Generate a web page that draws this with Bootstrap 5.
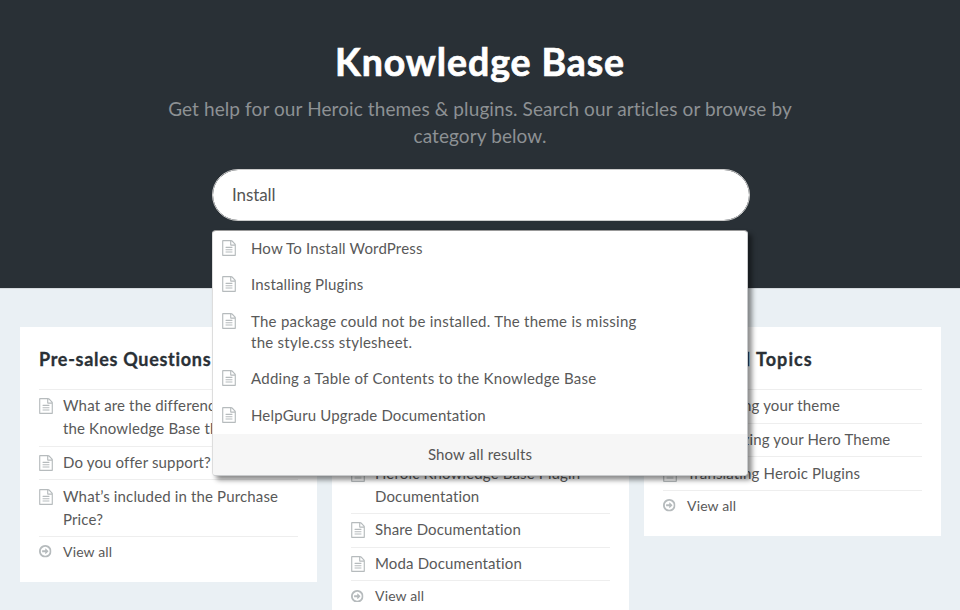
<!DOCTYPE html>
<html lang="en">
<head>
<meta charset="utf-8">
<meta name="viewport" content="width=device-width, initial-scale=1">
<title>Knowledge Base</title>
<link href="https://cdn.jsdelivr.net/npm/bootstrap@5.3.0/dist/css/bootstrap.min.css" rel="stylesheet">
<style>
body{background:#eaf0f4;font-family:Lato,"Open Sans",sans-serif;font-size:15px;color:#595959;letter-spacing:.15px;height:610px;overflow:hidden}
.hero{background:#293036;height:289px;border-bottom:1px solid #d5dade;padding-top:36px}
.hero h1{font-size:37.5px;line-height:52px;font-weight:700;color:#fff;letter-spacing:.9px;-webkit-text-stroke:.7px #fff}
.tagline{font-size:19px;line-height:27px;width:640px;margin-top:7px;color:#8d9194;letter-spacing:.1px}
.search{width:538px;margin:20px 0 0 2px}
.search .form-control{height:52px;padding:0 19px 1px;font-size:17px;color:#555;border:1px solid #ccc;letter-spacing:-.1px}
.results{top:61px;left:0;width:536px;background:#fff;border:1px solid #c8cacc;border-top-color:#999;border-left-color:#ddd;border-radius:4px;box-shadow:4px 4px 5px rgba(0,0,0,.45);padding:0;z-index:5}
.results li{padding:7.75px 90px 7.75px 9px;line-height:21px}
.results li:first-child{padding-top:6.75px}
.results .wide{letter-spacing:.26px}
.results .doc{margin-top:2px}
.results li>.doc{margin-right:15px}
.show-all{height:41px;background:#f6f6f6;border-radius:0 0 3px 3px;color:#555}
.topics{padding:38px 19px 0 20px;gap:15px}
.topic{width:297px;background:#fff;padding:0 19px}
.topic h2{height:63px;margin:0;padding-top:20px;font-size:18px;line-height:24px;font-weight:700;color:#2a3036;letter-spacing:.7px;-webkit-text-stroke:.3px #2a3036;border-bottom:1px solid #eee;white-space:nowrap}
.topic h2.spaced{letter-spacing:1.08px}
.topic li{padding:4.2px 0 5.5px;line-height:23px;border-bottom:1px solid #eee}
.topic li>.doc{margin:4px 10.5px 0 -.5px}
.more{font-size:14px;line-height:23px;padding:3px 0 19px}
.more svg{width:12.5px;height:12.5px;margin-right:11.5px}
.doc{width:14px;height:16px}
svg{fill:#b6bbbd;flex:none}
</style>
</head>
<body>
<svg class="d-none" aria-hidden="true">
<symbol id="doc" viewBox="128 0 1536 1792"><path d="M1596 380q28 28 48 76t20 88v1152q0 40-28 68t-68 28h-1344q-40 0-68-28t-28-68v-1600q0-40 28-68t68-28h896q40 0 88 20t76 48zm-444-244v376h376q-10-29-22-41l-313-313q-12-12-41-22zm384 1528v-1024h-416q-40 0-68-28t-28-68v-416h-768v1536h1280zm-1024-864q0-14 9-23t23-9h704q14 0 23 9t9 23v64q0 14-9 23t-23 9h-704q-14 0-23-9t-9-23v-64zm736 224q14 0 23 9t9 23v64q0 14-9 23t-23 9h-704q-14 0-23-9t-9-23v-64q0-14 9-23t23-9h704zm0 256q14 0 23 9t9 23v64q0 14-9 23t-23 9h-704q-14 0-23-9t-9-23v-64q0-14 9-23t23-9h704z"/></symbol>
<symbol id="arrow" viewBox="128 128 1536 1536"><path d="M1280 896q0 14-9 23l-320 320q-9 9-23 9-13 0-22.500-9.500t-9.500-22.500v-192h-352q-13 0-22.500-9.500t-9.500-22.500v-192q0-13 9.500-22.500t22.500-9.500h352v-192q0-14 9-23t23-9q12 0 24 10l319 319q9 9 9 23zm160 0q0-148-73-273t-198-198-273-73-273 73-198 198-73 273 73 273 198 198 273 73 273-73 198-198 73-273zm224 0q0 209-103 385.500t-279.500 279.500-385.500 103-385.500-103-279.500-279.500-103-385.500 103-385.500 279.500-279.500 385.500-103 385.500 103 279.500 279.500 103 385.500z"/></symbol>
</svg>
<header class="hero d-flex flex-column align-items-center text-center">
<h1 class="m-0">Knowledge Base</h1>
<p class="tagline mb-0">Get help for our Heroic themes &amp; plugins. Search our articles or browse by category below.</p>
<div class="search position-relative text-start">
<input class="form-control rounded-pill shadow-none" type="text" value="Install" aria-label="Search">
<div class="results position-absolute">
<ul class="list-unstyled m-0">
<li class="d-flex"><svg class="doc"><use href="#doc"/></svg><span>How To Install WordPress</span></li>
<li class="d-flex"><svg class="doc"><use href="#doc"/></svg><span>Installing Plugins</span></li>
<li class="d-flex wide"><svg class="doc"><use href="#doc"/></svg><span>The package could not be installed. The theme is missing the style.css stylesheet.</span></li>
<li class="d-flex wide"><svg class="doc"><use href="#doc"/></svg><span>Adding a Table of Contents to the Knowledge Base</span></li>
<li class="d-flex"><svg class="doc"><use href="#doc"/></svg><span>HelpGuru Upgrade Documentation</span></li>
</ul>
<div class="show-all d-flex align-items-center justify-content-center">Show all results</div>
</div>
</div>
</header>
<main class="topics d-flex align-items-start">
<section class="topic">
<h2>Pre-sales Questions</h2>
<ul class="list-unstyled m-0">
<li class="d-flex"><svg class="doc"><use href="#doc"/></svg><span>What are the differences between the Knowledge Base themes?</span></li>
<li class="d-flex"><svg class="doc"><use href="#doc"/></svg><span>Do you offer support?</span></li>
<li class="d-flex"><svg class="doc"><use href="#doc"/></svg><span>What’s included in the Purchase Price?</span></li>
</ul>
<div class="more d-flex align-items-center"><svg><use href="#arrow"/></svg>View all</div>
</section>
<section class="topic">
<h2>Documentation</h2>
<ul class="list-unstyled m-0">
<li class="d-flex"><svg class="doc"><use href="#doc"/></svg><span>HelpGuru Documentation</span></li>
<li class="d-flex"><svg class="doc"><use href="#doc"/></svg><span>KnowHow Documentation</span></li>
<li class="d-flex"><svg class="doc"><use href="#doc"/></svg><span>Heroic Knowledge Base Plugin Documentation</span></li>
<li class="d-flex"><svg class="doc"><use href="#doc"/></svg><span>Share Documentation</span></li>
<li class="d-flex"><svg class="doc"><use href="#doc"/></svg><span>Moda Documentation</span></li>
</ul>
<div class="more d-flex align-items-center"><svg><use href="#arrow"/></svg>View all</div>
</section>
<section class="topic">
<h2 class="spaced">Advanced Topics</h2>
<ul class="list-unstyled m-0">
<li class="d-flex"><svg class="doc"><use href="#doc"/></svg><span>Translating your theme</span></li>
<li class="d-flex"><svg class="doc"><use href="#doc"/></svg><span>Customizing your Hero Theme</span></li>
<li class="d-flex"><svg class="doc"><use href="#doc"/></svg><span>Translating Heroic Plugins</span></li>
</ul>
<div class="more d-flex align-items-center"><svg><use href="#arrow"/></svg>View all</div>
</section>
</main>
<script src="https://cdn.jsdelivr.net/npm/bootstrap@5.3.0/dist/js/bootstrap.bundle.min.js"></script>
</body>
</html>
